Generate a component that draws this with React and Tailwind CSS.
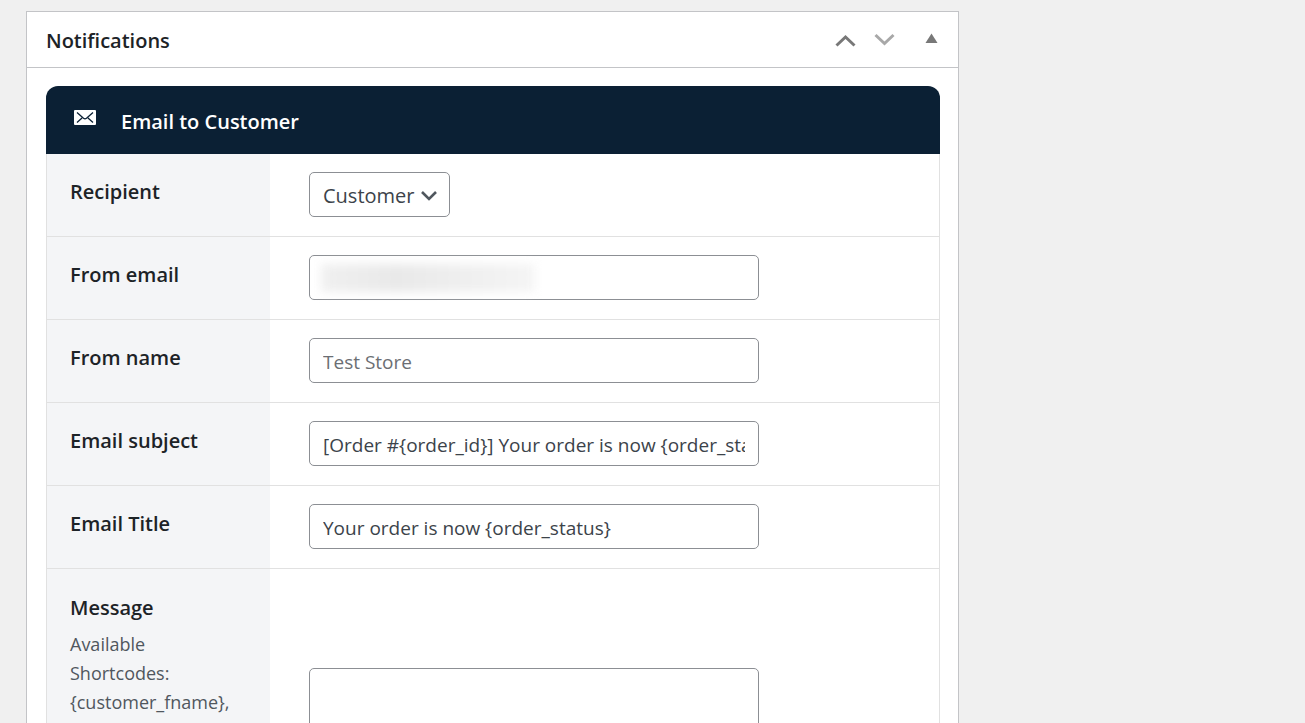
import { useState } from "react";

const inputClass =
  "block w-full max-w-[450px] h-[45px] px-[13px] pt-[3px] rounded-[5px] border border-[#8c8f94] bg-white text-[19px] text-[#3c434a] placeholder:text-[#6b6e73] outline-none focus:border-[#2271b1]";

function FieldRow({ id, label, children }) {
  return (
    <div className="flex border-b border-[#e1e1e1]">
      <label
        htmlFor={id}
        className="w-[223px] shrink-0 bg-[#f4f5f7] pl-[23px] pt-6 text-xl leading-7 font-semibold text-[#1d2327]"
      >
        {label}
      </label>
      <div className="flex-1 min-w-0 pl-[39px] pr-6 pt-[18px] pb-[19px]">
        {children}
      </div>
    </div>
  );
}

function EnvelopeIcon() {
  return (
    <svg width="22" height="16" viewBox="0 0 22 16" aria-hidden="true">
      <rect width="22" height="15" rx="1" fill="#fff" />
      <path
        d="M3 2.5 9.5 8.3Q11 9.5 12.5 8.3L19 2.5M3 12.5 8 8M19 12.5 14 8"
        fill="none"
        stroke="#0b2034"
        strokeWidth="1.3"
      />
    </svg>
  );
}

export default function App() {
  const [open, setOpen] = useState(true);
  const [recipient, setRecipient] = useState("customer");

  return (
    <div className="h-screen overflow-hidden bg-[#f0f0f0] pt-[11px] pl-[26px] pr-[346px] font-['Open_Sans','Noto_Sans',sans-serif]">
      <section className="border border-[#c3c4c7] bg-white">
        <header className="flex items-center justify-between h-14 pl-[19px] pr-4 border-b border-[#c3c4c7]">
          <h2 className="pt-0.5 text-xl font-semibold text-[#1d2327]">
            Notifications
          </h2>
          <div className="flex items-center">
            <button type="button" aria-label="Move up" className="mr-[17px]">
              <svg width="22" height="14" viewBox="0 0 22 14">
                <path
                  d="M1.5 12.5 10.5 4 19.5 12.5"
                  fill="none"
                  stroke="#787878"
                  strokeWidth="3"
                />
              </svg>
            </button>
            <button type="button" aria-label="Move down" className="mr-6">
              <svg width="22" height="14" viewBox="0 0 22 14">
                <path
                  d="M1.5 2 10.5 10.5 19.5 2"
                  fill="none"
                  stroke="#a8a8a8"
                  strokeWidth="3"
                />
              </svg>
            </button>
            <button
              type="button"
              aria-label="Toggle panel"
              aria-expanded={open}
              onClick={() => setOpen(!open)}
              className="pb-1"
            >
              <svg width="22" height="10" viewBox="0 0 22 10">
                <path d="M11.5 0.5 17.5 10H5.5Z" fill="#787878" />
              </svg>
            </button>
          </div>
        </header>

        {open && (
          <div className="pl-[19px] pr-[18px] pt-[18px] pb-5">
            <div className="flex items-center h-[68px] pl-7 rounded-t-xl bg-[#0b2034] text-white">
              <span className="mr-[25px] pb-1">
                <EnvelopeIcon />
              </span>
              <h3 className="pt-1 text-xl font-semibold">Email to Customer</h3>
            </div>

            <form className="border-x border-[#e1e1e1]">
              <FieldRow id="recipient" label="Recipient">
                <div className="relative w-[141px]">
                  <select
                    id="recipient"
                    value={recipient}
                    onChange={(e) => setRecipient(e.target.value)}
                    className="appearance-none w-full h-[45px] pl-[13px] pr-8 pt-0.5 rounded-[5px] border border-[#8c8f94] bg-white text-xl text-[#3c434a]"
                  >
                    <option value="customer">Customer</option>
                    <option value="admin">Admin</option>
                  </select>
                  <svg
                    width="18"
                    height="12"
                    viewBox="0 0 18 12"
                    className="absolute right-3 top-[18px] pointer-events-none"
                  >
                    <path
                      d="M2 2 9 9 16 2"
                      fill="none"
                      stroke="#50575e"
                      strokeWidth="2.6"
                    />
                  </svg>
                </div>
              </FieldRow>

              <FieldRow id="from-email" label="From email">
                <div className="relative">
                  <input id="from-email" type="email" className={inputClass} />
                  {/* redacted address */}
                  <span className="absolute left-3 top-[9px] w-[214px] h-7 bg-linear-to-r from-[#f0f0f0] via-[#e9e9e9] via-35% to-[#f5f5f5] blur-[5px] pointer-events-none" />
                </div>
              </FieldRow>

              <FieldRow id="from-name" label="From name">
                <input
                  id="from-name"
                  type="text"
                  placeholder="Test Store"
                  className={inputClass}
                />
              </FieldRow>

              <FieldRow id="email-subject" label="Email subject">
                <input
                  id="email-subject"
                  type="text"
                  defaultValue="[Order #{order_id}] Your order is now {order_status}"
                  className={inputClass}
                />
              </FieldRow>

              <FieldRow id="email-title" label="Email Title">
                <input
                  id="email-title"
                  type="text"
                  defaultValue="Your order is now {order_status}"
                  className={inputClass}
                />
              </FieldRow>

              <div className="flex">
                <div className="w-[223px] shrink-0 bg-[#f4f5f7] px-[23px] py-[25px]">
                  <label
                    htmlFor="message"
                    className="block text-xl leading-7 font-semibold text-[#1d2327]"
                  >
                    Message
                  </label>
                  <p className="mt-2 text-lg leading-[29px] text-[#50575e]">
                    Available Shortcodes: {"{customer_fname},"}
                  </p>
                </div>
                <div className="flex-1 min-w-0 pl-[39px] pr-6 pt-[99px] pb-5">
                  <textarea
                    id="message"
                    rows={8}
                    className="block w-full max-w-[450px] px-[13px] py-2 rounded-[5px] border border-[#8c8f94] bg-white text-[19px] text-[#3c434a] resize-none outline-none"
                  />
                </div>
              </div>
            </form>
          </div>
        )}
      </section>
    </div>
  );
}
